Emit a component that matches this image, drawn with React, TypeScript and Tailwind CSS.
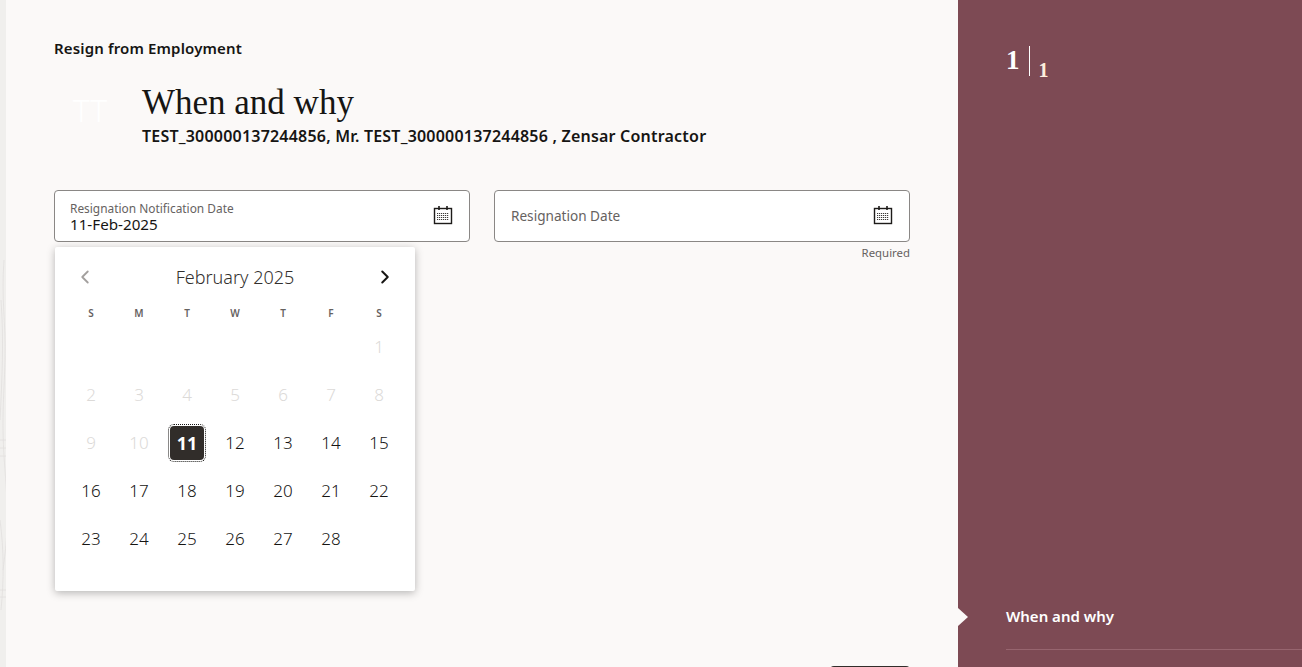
import { ChevronLeft, ChevronRight } from "lucide-react";

const SANS = "font-['Noto_Sans','Open_Sans',sans-serif]";
const DAYS = ["S", "M", "T", "W", "T", "F", "S"];
const WEEKS: (number | null)[][] = [
  [null, null, null, null, null, null, 1],
  [2, 3, 4, 5, 6, 7, 8],
  [9, 10, 11, 12, 13, 14, 15],
  [16, 17, 18, 19, 20, 21, 22],
  [23, 24, 25, 26, 27, 28, null],
];

function CalendarIcon() {
  return (
    <svg width="20" height="20" viewBox="0 0 20 20" fill="none" className="mb-[2px] shrink-0">
      <rect x="1.5" y="3.5" width="17" height="15" stroke="#1d1b19" strokeWidth="1.4" fill="#fff" />
      <path d="M6 1v4M14 1v4" stroke="#1d1b19" strokeWidth="1.6" />
      <path d="M4 8.5h12M4 10.5h12M4 12.5h12M4 14.5h12" stroke="#3c3a38" strokeWidth="1.1" strokeDasharray="1.2 0.8" />
    </svg>
  );
}

function DateField({ label, value, hint }: { label: string; value?: string; hint?: string }) {
  return (
    <div className="flex-1">
      <div className="h-[52px] rounded-[4px] border border-[#8a8785] bg-white pl-[15px] pr-[16px] flex items-center justify-between">
        {value ? (
          <div className="flex flex-col pt-[2px]">
            <span className="text-[11.9px] leading-[14px] text-[#66625f]">{label}</span>
            <span className="text-[15.2px] leading-[19px] text-[#161513]">{value}</span>
          </div>
        ) : (
          <span className="pl-[1px] text-[13.6px] text-[#66625f]">{label}</span>
        )}
        <CalendarIcon />
      </div>
      {hint && <p className="mt-[3px] text-right text-[11.4px] leading-[16px] text-[#66625f]">{hint}</p>}
    </div>
  );
}

function Calendar() {
  return (
    <div className="absolute left-[1px] top-[57px] w-[360px] h-[344px] bg-white rounded-[2px] shadow-[0_2px_8px_rgba(0,0,0,0.28)] px-[12px]">
      <div className="flex h-[60px] items-center justify-between px-[7px]">
        <ChevronLeft size={22} strokeWidth={2} className="text-[#a3a09e]" />
        <span className="text-[18px] font-light text-[#33302e]">February 2025</span>
        <ChevronRight size={22} strokeWidth={2.2} className="text-[#161513]" />
      </div>
      <div className="grid grid-cols-[repeat(7,48px)] -mt-[1px] h-[14px] items-center">
        {DAYS.map((d, i) => (
          <span key={i} className="text-center text-[10px] font-semibold leading-[14px] text-[#66625f]">
            {d}
          </span>
        ))}
      </div>
      <div className="mt-[3px] grid grid-cols-[repeat(7,48px)] auto-rows-[48px]">
        {WEEKS.flat().map((n, i) => {
          if (n === null) return <span key={i} />;
          if (n === 11) {
            return (
              <span key={i} className="flex items-center justify-center">
                <span className="h-[38px] w-[38px] rounded-[6px] border border-dotted border-[#161513] bg-white p-[1px]">
                  <span className="flex h-full w-full items-center justify-center rounded-[4px] bg-[#312d2a] text-[18px] font-bold text-white">
                    11
                  </span>
                </span>
              </span>
            );
          }
          return (
            <span
              key={i}
              className={`flex items-center justify-center text-[17px] font-light ${n < 11 ? "text-[#dcdad8]" : "text-[#161513]"}`}
            >
              {n}
            </span>
          );
        })}
      </div>
    </div>
  );
}

export default function App() {
  return (
    <div className={`${SANS} flex h-[667px] w-[1302px] overflow-hidden bg-[#fbf9f8]`}>
      <div className="w-[6px] shrink-0 bg-[#f0efed] overflow-hidden">
        <svg width="6" height="667" viewBox="0 0 6 667" fill="none" stroke="#e2e0de" strokeWidth="0.8">
          <path d="M4 260c-3 40 2 60 1 100s-4 60 0 110 2 70-2 100" />
          <path d="M1 300c3 40 1 80-1 120M0 440h6M0 448h6M0 456h6M0 520c4 30 4 60 1 90M0 590h6M0 597h6" />
        </svg>
      </div>

      <main className="relative w-[952px] shrink-0 pl-[48px] pr-[48px] pt-[38px]">
        <h2 className="text-[15px] font-semibold tracking-[0.15px] leading-[20px] text-[#161513]">Resign from Employment</h2>

        <div className="mt-[24px] flex">
          <div className="flex w-[88px] shrink-0 items-center justify-center pb-[8px] pr-[16px] text-[32px] font-light leading-none text-white">
            TT
          </div>
          <div>
            <h1 className="mt-[1px] font-['Liberation_Serif',serif] text-[35px] leading-[40px] text-[#161513]">When and why</h1>
            <p className="mt-[3px] text-[16px] font-semibold tracking-[0.21px] leading-[20px] text-[#161513]">
              TEST_300000137244856, Mr. TEST_300000137244856 , Zensar Contractor
            </p>
          </div>
        </div>

        <div className="relative mt-[44px] flex gap-[24px]">
          <DateField label="Resignation Notification Date" value="11-Feb-2025" />
          <DateField label="Resignation Date" hint="Required" />
          <Calendar />
        </div>

        <div className="absolute bottom-[-30px] right-[48px] h-[31px] w-[80px] rounded-[4px] bg-[#312d2a]" />
      </main>

      <aside className="relative flex-1 bg-[#7d4a54] pl-[48px]">
        <div className="flex h-[606px] items-start pt-[46px] font-['Liberation_Serif',serif] font-bold text-white">
          <span className="text-[27px] leading-[28px]">1</span>
          <span className="ml-[9px] mr-[9px] h-[30px] w-px bg-white" />
          <span className="mt-[14px] text-[20px] leading-[20px] text-[#fdeede]">1</span>
        </div>
        <div className="relative flex h-[44px] items-start border-b border-[#97656f] text-[15px] font-semibold text-white">
          <span className="leading-[20px]">When and why</span>
        </div>
        <div className="absolute left-0 top-[608px] h-0 w-0 border-y-[9px] border-l-[10px] border-y-transparent border-l-[#fbf9f8]" />
      </aside>
    </div>
  );
}
